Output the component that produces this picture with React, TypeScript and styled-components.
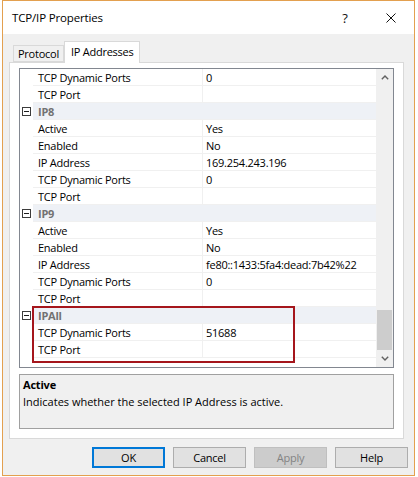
import styled, { createGlobalStyle } from 'styled-components';

const GlobalStyle = createGlobalStyle`
  html, body {
    margin: 0;
    padding: 0;
    background: #ffffff;
  }
  body {
    font-family: "Open Sans", "Noto Sans", sans-serif;
    font-size: 11px;
    letter-spacing: -0.25px;
    color: #000000;
  }
`;

type Prop = { name: string; value?: string };
type Group = { title?: string; props: Prop[] };

const groups: Group[] = [
  {
    props: [
      { name: 'TCP Dynamic Ports', value: '0' },
      { name: 'TCP Port' },
    ],
  },
  {
    title: 'IP8',
    props: [
      { name: 'Active', value: 'Yes' },
      { name: 'Enabled', value: 'No' },
      { name: 'IP Address', value: '169.254.243.196' },
      { name: 'TCP Dynamic Ports', value: '0' },
      { name: 'TCP Port' },
    ],
  },
  {
    title: 'IP9',
    props: [
      { name: 'Active', value: 'Yes' },
      { name: 'Enabled', value: 'No' },
      { name: 'IP Address', value: 'fe80::1433:5fa4:dead:7b42%22' },
      { name: 'TCP Dynamic Ports', value: '0' },
      { name: 'TCP Port' },
    ],
  },
  {
    title: 'IPAll',
    props: [
      { name: 'TCP Dynamic Ports', value: '51688' },
      { name: 'TCP Port' },
    ],
  },
];

const Window = styled.div`
  box-sizing: border-box;
  width: 413px;
  height: 476px;
  margin-left: 2px;
  border: 1px solid #e3a04f;
  display: flex;
  flex-direction: column;
`;

const TitleBar = styled.div`
  height: 33px;
  flex: none;
  background: #ffffff;
  display: flex;
  align-items: center;
  padding-left: 9px;
`;

const Title = styled.div`
  flex: 1;
  font-size: 11.5px;
  letter-spacing: -0.15px;
  padding-bottom: 1px;
`;

const CaptionButton = styled.div`
  width: 46px;
  height: 33px;
  display: flex;
  align-items: center;
  justify-content: center;
  font-size: 13px;
  color: #111;
`;

const Client = styled.div`
  flex: 1;
  background: #f0f0f0;
  padding: 7px 0 0 6px;
  display: flex;
  flex-direction: column;
`;

const TabStrip = styled.div`
  display: flex;
  align-items: flex-end;
  height: 21px;
  padding-left: 4px;
`;

const Tab = styled.div<{ $active?: boolean }>`
  box-sizing: border-box;
  position: relative;
  z-index: 1;
  height: ${(p) => (p.$active ? '22px' : '17px')};
  margin-bottom: ${(p) => (p.$active ? '-1px' : '0')};
  padding: ${(p) => (p.$active ? '2px 6px 0 6px' : '0 4px 0 4px')};
  background: ${(p) => (p.$active ? '#ffffff' : '#f0f0f0')};
  border: 1px solid #d9d9d9;
  border-bottom: ${(p) => (p.$active ? 'none' : '1px solid #d9d9d9')};
  display: flex;
  align-items: ${(p) => (p.$active ? 'flex-start' : 'center')};
  line-height: 16px;
  white-space: nowrap;
`;

const TabPanel = styled.div`
  box-sizing: border-box;
  width: 395px;
  height: 377px;
  background: #ffffff;
  border: 1px solid #d9d9d9;
  padding: 5px 9px 9px 9px;
  display: flex;
  flex-direction: column;
  gap: 6px;
`;

const Grid = styled.div`
  box-sizing: border-box;
  height: 300px;
  flex: none;
  border: 1px solid #828790;
  background: #ffffff;
  display: flex;
  overflow: hidden;
`;

const Rows = styled.div`
  position: relative;
  flex: 1;
  display: flex;
  flex-direction: column;
`;

const Row = styled.div`
  height: 17px;
  flex: none;
  display: flex;
`;

const Gutter = styled.div`
  width: 13px;
  flex: none;
  display: flex;
  align-items: center;
  padding-left: 2px;
  box-sizing: border-box;
`;

const Expander = styled.div`
  box-sizing: border-box;
  width: 9px;
  height: 9px;
  border: 1px solid #3c3c3c;
  display: flex;
  align-items: center;
  justify-content: center;
  background: #fff;

  &::after {
    content: '';
    width: 5px;
    height: 1px;
    background: #1e1e1e;
  }
`;

const RowBody = styled.div<{ $category?: boolean }>`
  box-sizing: border-box;
  flex: 1;
  display: flex;
  align-items: center;
  border-bottom: 1px solid #f0f0f0;
  background: ${(p) => (p.$category ? '#eef1f6' : '#ffffff')};
  white-space: nowrap;
`;

const NameCell = styled.div`
  box-sizing: border-box;
  width: 170px;
  height: 100%;
  display: flex;
  align-items: center;
  padding-left: 5px;
  border-right: 1px solid #f0f0f0;
`;

const ValueCell = styled.div`
  flex: 1;
  padding-left: 3px;
`;

const CategoryTitle = styled.div`
  padding-left: 5px;
  font-weight: 700;
  color: #727272;
`;

const Highlight = styled.div`
  position: absolute;
  left: 12px;
  top: 237px;
  width: 263px;
  height: 57px;
  box-sizing: border-box;
  border: 2px solid #a5161c;
  pointer-events: none;
`;

const ScrollBar = styled.div`
  width: 17px;
  flex: none;
  background: #f0f0f0;
  display: flex;
  flex-direction: column;
`;

const ScrollArrow = styled.div`
  height: 17px;
  flex: none;
  display: flex;
  align-items: center;
  justify-content: center;
`;

const ScrollTrack = styled.div`
  flex: 1;
  display: flex;
  flex-direction: column;
  justify-content: flex-end;
  padding: 0 1px;
`;

const ScrollThumb = styled.div`
  height: 40px;
  background: #cdcdcd;
`;

const Description = styled.div`
  box-sizing: border-box;
  height: 55px;
  flex: none;
  background: #f0f0f0;
  border: 1px solid #a0a0a0;
  padding: 1px 3px;
  line-height: 17px;
  letter-spacing: 0;
`;

const DescTitle = styled.div`
  font-weight: 700;
  letter-spacing: -0.2px;
`;

const ButtonBar = styled.div`
  display: flex;
  justify-content: flex-end;
  gap: 8px;
  padding: 8px 6px 0 0;
`;

const Button = styled.div<{ $default?: boolean; $disabled?: boolean }>`
  box-sizing: border-box;
  width: 73px;
  height: 21px;
  display: flex;
  align-items: center;
  justify-content: center;
  background: ${(p) => (p.$disabled ? '#cccccc' : '#e1e1e1')};
  border: ${(p) =>
    p.$default ? '2px solid #0078d7' : p.$disabled ? '1px solid #bfbfbf' : '1px solid #adadad'};
  color: ${(p) => (p.$disabled ? '#838383' : '#000000')};
`;

const Chevron = ({ up }: { up?: boolean }) => (
  <svg width="8" height="5" viewBox="0 0 8 5">
    <path
      d={up ? 'M0.8 4.2 L4 1 L7.2 4.2' : 'M0.8 0.8 L4 4 L7.2 0.8'}
      fill="none"
      stroke="#606060"
      strokeWidth="1.4"
    />
  </svg>
);

const CloseIcon = () => (
  <svg width="10" height="10" viewBox="0 0 10 10">
    <path d="M0.5 0.5 L9.5 9.5 M9.5 0.5 L0.5 9.5" stroke="#111" strokeWidth="1" />
  </svg>
);

export default function App() {
  return (
    <>
      <GlobalStyle />
      <Window>
        <TitleBar>
          <Title>TCP/IP Properties</Title>
          <CaptionButton>?</CaptionButton>
          <CaptionButton>
            <CloseIcon />
          </CaptionButton>
        </TitleBar>
        <Client>
          <TabStrip>
            <Tab>Protocol</Tab>
            <Tab $active>IP Addresses</Tab>
          </TabStrip>
          <TabPanel>
            <Grid>
              <Rows>
                {groups.map((g, gi) => (
                  <div key={gi}>
                    {g.title && (
                      <Row>
                        <Gutter>
                          <Expander />
                        </Gutter>
                        <RowBody $category>
                          <CategoryTitle>{g.title}</CategoryTitle>
                        </RowBody>
                      </Row>
                    )}
                    {g.props.map((p, pi) => (
                      <Row key={pi}>
                        <Gutter />
                        <RowBody>
                          <NameCell>{p.name}</NameCell>
                          <ValueCell>{p.value ?? ''}</ValueCell>
                        </RowBody>
                      </Row>
                    ))}
                  </div>
                ))}
                <Highlight />
              </Rows>
              <ScrollBar>
                <ScrollArrow>
                  <Chevron up />
                </ScrollArrow>
                <ScrollTrack>
                  <ScrollThumb />
                </ScrollTrack>
                <ScrollArrow>
                  <Chevron />
                </ScrollArrow>
              </ScrollBar>
            </Grid>
            <Description>
              <DescTitle>Active</DescTitle>
              <div>Indicates whether the selected IP Address is active.</div>
            </Description>
          </TabPanel>
          <ButtonBar>
            <Button $default>OK</Button>
            <Button>Cancel</Button>
            <Button $disabled>Apply</Button>
            <Button>Help</Button>
          </ButtonBar>
        </Client>
      </Window>
    </>
  );
}
